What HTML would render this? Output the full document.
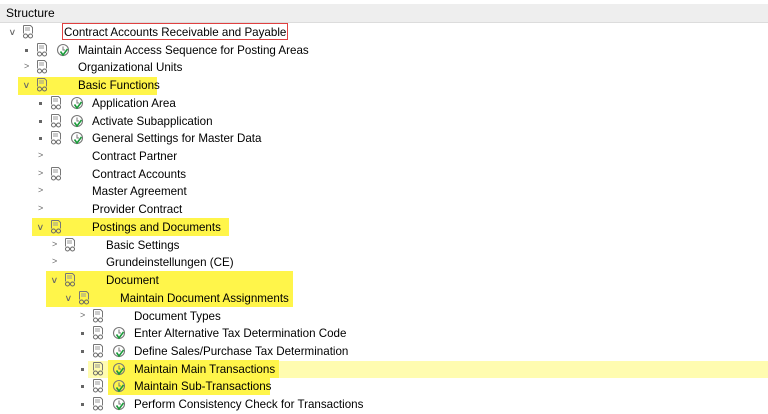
<!DOCTYPE html>
<html><head><style>
body{margin:0;width:768px;height:408px;overflow:hidden;background:#fff;font-family:Tahoma,"Liberation Sans",sans-serif;font-size:11.6px;color:#000;position:relative}
.hdr{position:absolute;left:0;top:4px;width:768px;height:18px;background:#eeeeee;border-bottom:1px solid #dcdcdc}
.hdr span{position:absolute;left:6px;top:2px;font-size:12px}
.r{position:absolute;height:18px;line-height:18px;white-space:nowrap}
.hl{position:absolute;background:#fff54a}
.ar{position:absolute;font-size:9px;color:#666}
.bu{position:absolute;width:3px;height:3px;background:#666}
svg{position:absolute}
</style></head><body>
<div class="hdr"><span>Structure</span></div>
<div class="hl" style="left:18px;top:77px;width:139px;height:18px"></div>
<div class="hl" style="left:32px;top:218px;width:197px;height:18px"></div>
<div class="hl" style="left:46px;top:271px;width:247px;height:36px"></div>
<div class="hl" style="left:88px;top:361px;width:680px;height:17px;background:#fffcb0"></div>
<div class="hl" style="left:108px;top:360px;width:171px;height:18px"></div>
<div class="hl" style="left:108px;top:378px;width:162px;height:17px"></div>
<div style="position:absolute;left:62px;top:23px;width:226px;height:17px;border:1px solid #e04040;box-sizing:border-box"></div>

<svg width="0" height="0"><defs>
<g id="doc"><path d="M1.5 .5h7l2 2v6" fill="none" stroke="#777"/><path d="M1.5 .5v8" stroke="#777"/><path d="M3 3h5M3 5h5" stroke="#999"/><circle cx="3.5" cy="11" r="2" fill="none" stroke="#666"/><circle cx="8.5" cy="11" r="2" fill="none" stroke="#666"/></g>
<g id="clk"><circle cx="7" cy="7" r="5.5" fill="none" stroke="#777" stroke-width="1.1"/><path d="M7 3.5v3.5h2" fill="none" stroke="#777"/><path d="M4.5 8.5l2.5 3.5 4.5-6" fill="none" stroke="#1a9a3a" stroke-width="1.6"/></g>
</defs></svg>

<div id="t"></div>
<script>
var rows=[
[0,'v',0,'Contract Accounts Receivable and Payable'],
[1,'.',1,'Maintain Access Sequence for Posting Areas'],
[1,'>',0,'Organizational Units'],
[1,'v',0,'Basic Functions'],
[2,'.',1,'Application Area'],
[2,'.',1,'Activate Subapplication'],
[2,'.',1,'General Settings for Master Data'],
[2,'>',-1,'Contract Partner'],
[2,'>',0,'Contract Accounts'],
[2,'>',-1,'Master Agreement'],
[2,'>',-1,'Provider Contract'],
[2,'v',0,'Postings and Documents'],
[3,'>',0,'Basic Settings'],
[3,'>',-1,'Grundeinstellungen (CE)'],
[3,'v',0,'Document'],
[4,'v',0,'Maintain Document Assignments'],
[5,'>',0,'Document Types'],
[5,'.',1,'Enter Alternative Tax Determination Code'],
[5,'.',1,'Define Sales/Purchase Tax Determination'],
[5,'.',1,'Maintain Main Transactions'],
[5,'.',1,'Maintain Sub-Transactions'],
[5,'.',1,'Perform Consistency Check for Transactions']];
var h='';
rows.forEach(function(r,i){
 var L=r[0],y=23+i*17.72,x0=[8,22,36,50,64,78][L];
 if(r[1]=='v')h+='<div class="ar" style="left:'+(x0+1)+'px;top:'+(y+4)+'px;transform:scaleX(1.2)">&#8744;</div>';
 else if(r[1]=='>')h+='<div class="ar" style="left:'+(x0+2)+'px;top:'+(y+3)+'px">&gt;</div>';
 else h+='<div class="bu" style="left:'+(x0+3)+'px;top:'+(y+8)+'px"></div>';
 if(r[2]>=0)h+='<svg style="left:'+(x0+14)+'px;top:'+(y+2)+'px" width="12" height="14"><use href="#doc"/></svg>';
 if(r[2]==1)h+='<svg style="left:'+(x0+34)+'px;top:'+(y+2)+'px" width="14" height="14"><use href="#clk"/></svg>';
 h+='<div class="r" style="left:'+(x0+56)+'px;top:'+(y+1)+'px">'+r[3]+'</div>';
});
document.getElementById('t').innerHTML=h;
</script>
</body></html>
